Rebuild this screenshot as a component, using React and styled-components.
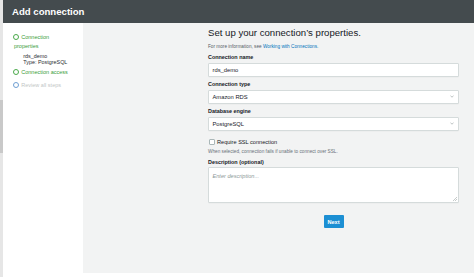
import React from "react";
import styled, { createGlobalStyle } from "styled-components";

const GlobalStyle = createGlobalStyle`
  html, body {
    margin: 0;
    padding: 0;
    background: #fff;
  }
  body {
    font-family: "Liberation Sans", Arial, sans-serif;
    color: #16191f;
  }
`;

const Page = styled.div`
  display: flex;
  width: 474px;
  height: 277px;
  overflow: hidden;
`;

const Rail = styled.div`
  position: relative;
  flex: none;
  width: 3px;
  background: #e6e6e6;
`;

const Thumb = styled.div`
  position: absolute;
  left: 0;
  top: 100px;
  width: 3px;
  height: 53px;
  background: #c9c9c9;
`;

const Shell = styled.div`
  flex: 1;
  display: flex;
  flex-direction: column;
`;

const Header = styled.header`
  height: 23px;
  flex: none;
  display: flex;
  align-items: center;
  padding-left: 9px;
  background: #444b4e;
  color: #fff;
  font-weight: bold;
  font-size: 9.6px;
`;

const Body = styled.div`
  display: flex;
  height: 250px;
`;

const Sidebar = styled.nav`
  width: 80px;
  flex: none;
  box-sizing: border-box;
  padding: 9.5px 0 0 9.7px;
  background: #fff;
`;

const stepColors = {
  done: { text: "#3a9d3a", dot: "#49a94a" },
  todo: { text: "#c2c6c6", dot: "#6f9fd2" },
};

const Step = styled.div`
  font-size: 5.5px;
  line-height: 9px;
  margin-top: ${(p) => p.$gap || 0}px;
  color: ${(p) => stepColors[p.$state].text};
`;

const Dot = styled.span`
  display: inline-block;
  width: 4px;
  height: 4px;
  margin-right: 2.6px;
  border: 1px solid ${(p) => stepColors[p.$state].dot};
  border-radius: 50%;
  vertical-align: -1px;
`;

const Wrapped = styled.span`
  padding-left: 1.3px;
`;

const StepDetail = styled.div`
  margin-top: 2px;
  padding-left: 10.6px;
  font-size: 5.4px;
  line-height: 6.6px;
  color: #2a2e33;
`;

const Main = styled.main`
  flex: 1;
  box-sizing: border-box;
  padding: 4px 0 0 125px;
  background: #f2f3f3;
`;

const Form = styled.form`
  width: 251px;
  display: flex;
  flex-direction: column;
`;

const Title = styled.h1`
  margin: 0;
  font-size: 9.6px;
  line-height: 12px;
  font-weight: normal;
  color: #16191f;
`;

const Info = styled.p`
  margin: 5px 0 0;
  font-size: 4.7px;
  line-height: 6px;
  color: #545b64;
`;

const Link = styled.a`
  color: #0073bb;
  text-decoration: none;
`;

const Label = styled.label`
  display: block;
  margin-top: ${(p) => p.$gap ?? 4}px;
  font-size: 5.4px;
  line-height: 7px;
  font-weight: bold;
  color: #16191f;
`;

const Control = styled.div`
  position: relative;
  box-sizing: border-box;
  display: flex;
  align-items: center;
  justify-content: space-between;
  height: ${(p) => p.$height || 13.5}px;
  margin-top: ${(p) => p.$gap ?? 2.5}px;
  padding: 0 4px 0 3.5px;
  background: #fff;
  border: 1px solid #d5dbdb;
  border-radius: 1px;
  box-shadow: 0 0.5px 0 rgba(0, 0, 0, 0.04);
  font-size: 5.8px;
  color: #16191f;
`;

const TextArea = styled(Control)`
  align-items: flex-start;
  padding-top: 5px;
  font-size: 5.6px;
  font-style: italic;
  color: #8d9999;
`;

const Grip = styled.svg`
  position: absolute;
  right: 1px;
  bottom: 1px;
`;

const CheckRow = styled.div`
  display: flex;
  align-items: center;
  gap: 2px;
  margin-top: 8px;
  padding-left: 1px;
  height: 7px;
  font-size: 5.6px;
  color: #16191f;
`;

const Box = styled.span`
  box-sizing: border-box;
  width: 6px;
  height: 6px;
  background: #fff;
  border: 1px solid #aab7b8;
  border-radius: 1px;
`;

const Help = styled.p`
  margin: 3.5px 0 0;
  font-size: 4.7px;
  line-height: 6px;
  color: #687078;
`;

const Actions = styled.div`
  display: flex;
  justify-content: center;
  margin-top: 12px;
`;

const Button = styled.button`
  width: 20px;
  height: 13px;
  padding: 0;
  border: none;
  border-radius: 1px;
  background: #1c8fd3;
  color: #fff;
  font-family: inherit;
  font-weight: bold;
  font-size: 5.6px;
`;

const Chevron = () => (
  <svg width="4" height="3" viewBox="0 0 4 3">
    <path d="M0.5 0.8 L2 2.2 L3.5 0.8" fill="none" stroke="#8d9999" strokeWidth="0.6" />
  </svg>
);

const Select = ({ value }) => (
  <Control>
    <span>{value}</span>
    <Chevron />
  </Control>
);

export default function App() {
  return (
    <>
      <GlobalStyle />
      <Page>
        <Rail>
          <Thumb />
        </Rail>
        <Shell>
          <Header>Add connection</Header>
          <Body>
            <Sidebar>
              <Step $state="done">
                <Dot $state="done" />
                Connection
                <br />
                <Wrapped>properties</Wrapped>
              </Step>
              <StepDetail>
                rds_demo
                <br />
                Type: PostgreSQL
              </StepDetail>
              <Step $state="done" $gap={2.6}>
                <Dot $state="done" />
                Connection access
              </Step>
              <Step $state="todo" $gap={4}>
                <Dot $state="todo" />
                Review all steps
              </Step>
            </Sidebar>
            <Main>
              <Form onSubmit={(e) => e.preventDefault()}>
                <Title>Set up your connection’s properties.</Title>
                <Info>
                  For more information, see <Link href="#">Working with Connections.</Link>
                </Info>
                <Label $gap={3.5}>Connection name</Label>
                <Control>rds_demo</Control>
                <Label>Connection type</Label>
                <Select value="Amazon RDS" />
                <Label>Database engine</Label>
                <Select value="PostgreSQL" />
                <CheckRow>
                  <Box />
                  Require SSL connection
                </CheckRow>
                <Help>When selected, connection fails if unable to connect over SSL.</Help>
                <Label $gap={3.5}>Description (optional)</Label>
                <TextArea $height={36} $gap={1.5}>
                  Enter description...
                  <Grip width="4" height="4" viewBox="0 0 4 4">
                    <path d="M4 0 L0 4 M4 2 L2 4" stroke="#a0a8a8" strokeWidth="0.6" />
                  </Grip>
                </TextArea>
                <Actions>
                  <Button type="submit">Next</Button>
                </Actions>
              </Form>
            </Main>
          </Body>
        </Shell>
      </Page>
    </>
  );
}
